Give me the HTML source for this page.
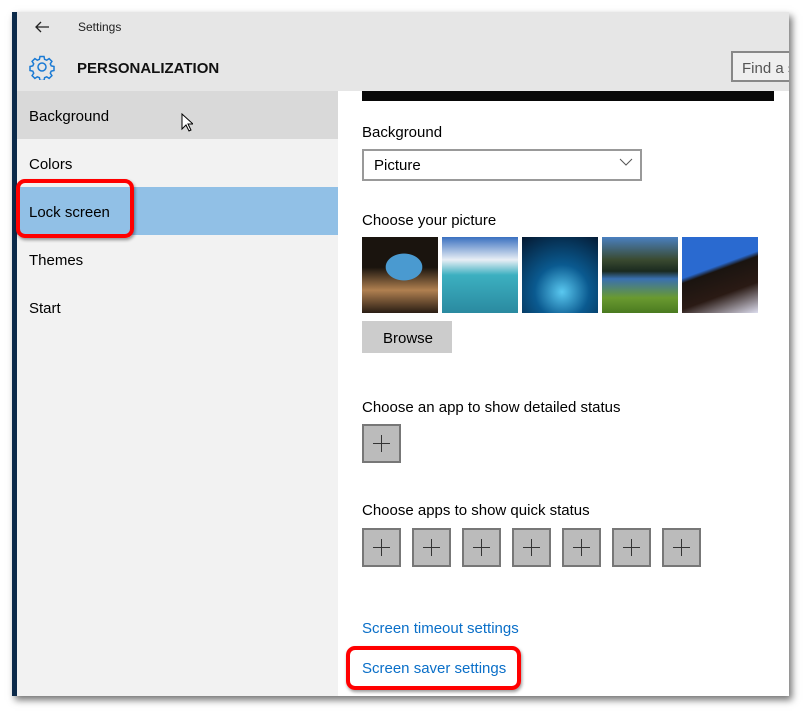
<!DOCTYPE html>
<html><head><style>
body{margin:0;width:809px;height:716px;background:#fff;position:relative;overflow:hidden;font-family:"Segoe UI","Liberation Sans",sans-serif;color:#000}
.a{position:absolute}
.win{left:12px;top:12px;width:777px;height:684px;background:#fff;box-shadow:3px 4px 7px rgba(0,0,0,.55);overflow:hidden}
.t{font-size:15px}
.sq{width:35px;height:35px;border:2px solid #777;background:#bbb}
.sq:before{content:"";position:absolute;left:9px;top:17px;width:17px;height:1px;background:#333}
.sq:after{content:"";position:absolute;left:17px;top:9px;width:1px;height:17px;background:#333}
.pic{width:76px;height:76px;top:237px}
.link{color:#0a6fc8;font-size:15px}
.red{border:4px solid #f00;border-radius:9px;box-shadow:1px 2px 3px rgba(0,0,0,.4)}
</style></head><body>
<div class="a win"></div>
<div class="a" style="left:12px;top:12px;width:777px;height:79px;background:#e6e6e6"></div>
<div class="a" style="left:12px;top:12px;width:5px;height:684px;background:#0c2a4a"></div>
<div class="a" style="left:17px;top:91px;width:321px;height:605px;background:#f2f2f2"></div>
<div class="a" style="left:17px;top:91px;width:321px;height:48px;background:#d9d9d9"></div>
<div class="a" style="left:17px;top:187px;width:321px;height:48px;background:#91c0e6"></div>
<svg class="a" style="left:34px;top:19px" width="16" height="16" viewBox="0 0 16 16"><path d="M15 8H2M7 3L2 8l5 5" stroke="#222" stroke-width="1.3" fill="none"/></svg>
<div class="a" style="left:78px;top:20px;font-size:12px;color:#222">Settings</div>
<svg class="a" style="left:29px;top:54px" width="26" height="26" viewBox="0 0 26 26"><g fill="none" stroke="#1a7ad4" stroke-width="1.5"><path d="M11 2.5h4l.6 2.8 2.1.9 2.4-1.6 2.8 2.8-1.6 2.4.9 2.1 2.8.6v4l-2.8.6-.9 2.1 1.6 2.4-2.8 2.8-2.4-1.6-2.1.9-.6 2.8h-4l-.6-2.8-2.1-.9-2.4 1.6-2.8-2.8 1.6-2.4-.9-2.1-2.8-.6v-4l2.8-.6.9-2.1-1.6-2.4 2.8-2.8 2.4 1.6 2.1-.9z"/><circle cx="13" cy="13" r="4"/></g></svg>
<div class="a" style="left:77px;top:60px;font-size:15px;font-weight:bold;color:#111">PERSONALIZATION</div>
<div class="a" style="left:731px;top:51px;width:56px;height:27px;border:2px solid #888;border-right:none;background:#efefef;overflow:hidden"><div style="position:absolute;left:9px;top:7px;font-size:15px;color:#555;white-space:nowrap">Find a s</div></div>
<div class="a t" style="left:29px;top:108px">Background</div>
<svg class="a" style="left:181px;top:113px" width="12" height="19" viewBox="0 0 12 19"><path d="M1 1v15l4-4 3 6 2-1-3-6h5z" fill="#fff" stroke="#000"/></svg>
<div class="a t" style="left:29px;top:156px">Colors</div>
<div class="a t" style="left:29px;top:204px">Lock screen</div>
<div class="a t" style="left:29px;top:252px">Themes</div>
<div class="a t" style="left:29px;top:300px">Start</div>
<div class="a red" style="left:16px;top:179px;width:110px;height:51px"></div>
<div class="a" style="left:362px;top:91px;width:412px;height:10px;background:#080808"></div>
<div class="a t" style="left:362px;top:124px">Background</div>
<div class="a" style="left:362px;top:149px;width:276px;height:28px;border:2px solid #999;background:#fff"></div>
<div class="a t" style="left:374px;top:157px">Picture</div>
<svg class="a" style="left:619px;top:158px" width="14" height="9" viewBox="0 0 14 9"><path d="M1 1l6 6 6-6" stroke="#555" fill="none"/></svg>
<div class="a t" style="left:362px;top:212px">Choose your picture</div>
<div class="a pic" style="left:362px;background:radial-gradient(ellipse 30px 22px at 42px 30px,#4a9ad0 60%,transparent 62%),linear-gradient(#1a140e 40%,#b08050 70%,#2a1e14)"></div>
<div class="a pic" style="left:442px;background:linear-gradient(#3a70c0,#e8eef5 30%,#3cb0c0 50%,#2a8aa0)"></div>
<div class="a pic" style="left:522px;background:radial-gradient(circle at 40px 55px,#5ac8f0,#0a5a90 40%,#041830)"></div>
<div class="a pic" style="left:602px;background:linear-gradient(#4a80c0,#3a4a30 30%,#1a2a20 45%,#3a70b0 55%,#6a9a30 80%,#4a7a20)"></div>
<div class="a pic" style="left:682px;background:linear-gradient(160deg,#2a6ad0 40%,#1a1410 45%,#2a1a14 70%,#dde 100%)"></div>
<div class="a" style="left:362px;top:321px;width:90px;height:32px;background:#ccc"></div>
<div class="a t" style="left:383px;top:330px">Browse</div>
<div class="a t" style="left:362px;top:399px">Choose an app to show detailed status</div>
<div class="a sq" style="left:362px;top:424px"></div>
<div class="a t" style="left:362px;top:502px">Choose apps to show quick status</div>
<div class="a sq" style="left:362px;top:528px"></div>
<div class="a sq" style="left:412px;top:528px"></div>
<div class="a sq" style="left:462px;top:528px"></div>
<div class="a sq" style="left:512px;top:528px"></div>
<div class="a sq" style="left:562px;top:528px"></div>
<div class="a sq" style="left:612px;top:528px"></div>
<div class="a sq" style="left:662px;top:528px"></div>
<div class="a link" style="left:362px;top:620px">Screen timeout settings</div>
<div class="a link" style="left:362px;top:660px">Screen saver settings</div>
<div class="a red" style="left:346px;top:646px;width:167px;height:36px"></div>
</body></html>
